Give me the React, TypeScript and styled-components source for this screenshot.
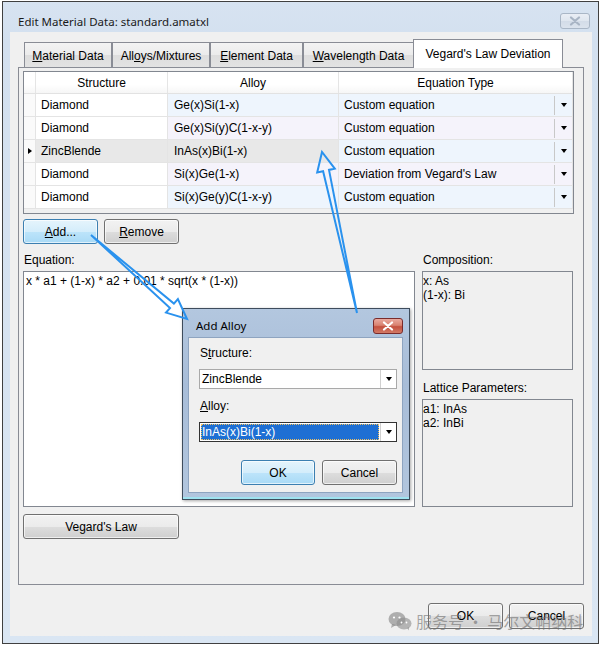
import React from 'react';
import styled, { createGlobalStyle } from 'styled-components';

const UI_FONT = `'Liberation Sans', Arial, sans-serif`;
const TITLE_FONT = `'Noto Sans', 'Liberation Sans', sans-serif`;

const GlobalStyle = createGlobalStyle`
  html, body { margin: 0; padding: 0; background: #ffffff; }
  body { font-family: ${UI_FONT}; font-size: 12px; color: #000; }
  * { box-sizing: border-box; }
  u { text-decoration: underline; text-underline-offset: 1px; }
`;

const Stage = styled.div`
  position: relative;
  width: 601px;
  height: 646px;
  overflow: hidden;
  background: #fff;
`;

const Window = styled.div`
  margin: 1px 0 0 2px;
  width: 597px;
  height: 643px;
  border: 1px solid #404040;
  background: linear-gradient(to bottom, #d7e3f1 0%, #d3e0ef 40px, #dae6f3 100%);
  display: flex;
  flex-direction: column;
`;

const TitleBar = styled.div`
  height: 30px;
  display: flex;
  align-items: flex-start;
  justify-content: space-between;
  padding: 0 8px 0 15px;
`;

const TitleText = styled.div`
  font-family: ${TITLE_FONT};
  font-size: 11.5px;
  color: #1a1a1a;
  margin-top: 13px;
  line-height: 14px;
`;

const CloseBtn = styled.div<{ $red?: boolean }>`
  width: 30px;
  height: 16px;
  margin-top: ${p => (p.$red ? 9 : 11)}px;
  border: 1px solid ${p => (p.$red ? '#7a2b2b' : '#a9b6c6')};
  border-radius: 3px;
  background: ${p =>
    p.$red
      ? 'linear-gradient(to bottom, #e9a99f 0%, #d98270 45%, #c4503e 55%, #d27a66 100%)'
      : 'linear-gradient(to bottom, #e9eef5 0%, #dfe6ef 50%, #d3dce8 51%, #dbe3ed 100%)'};
  display: flex;
  align-items: center;
  justify-content: center;
`;

const Client = styled.div`
  margin: 0 6px 0 7px;
  height: 604px;
  background: #f0f0f0;
  display: flex;
  flex-direction: column;
  padding: 8px 8px 0 8px;
`;

const TabStrip = styled.div`
  height: 28px;
  display: flex;
  align-items: flex-end;
  padding-left: 6px;
  margin-bottom: -1px;
  position: relative;
  z-index: 1;
`;

const Tab = styled.div<{ $w: number; $active?: boolean }>`
  width: ${p => p.$w}px;
  height: ${p => (p.$active ? 29 : 26)}px;
  margin-left: ${p => (p.$active ? -1 : 0)}px;
  border: 1px solid #898c95;
  border-bottom: ${p => (p.$active ? 'none' : '1px solid #898c95')};
  background: ${p =>
    p.$active ? '#ffffff' : 'linear-gradient(to bottom, #f3f3f3 0%, #ebebeb 50%, #dddddd 51%, #e3e3e3 100%)'};
  display: flex;
  align-items: center;
  justify-content: center;
  padding-bottom: ${p => (p.$active ? 1 : 0)}px;
  padding-top: ${p => (p.$active ? 0 : 1)}px;
  font-size: 12px;
  white-space: nowrap;
`;

const Panel = styled.div`
  height: 518px;
  border: 1px solid #898c95;
  background: #f0f0f0;
  padding: 3px 9px 0 4px;
  display: flex;
  flex-direction: column;
`;

const GridTable = styled.div`
  height: 143px;
  border: 1px solid #828790;
  background: #f0f0f0;
  display: flex;
  flex-direction: column;
`;

const COLS = '12px 132px 171px 1fr';

const HeaderRow = styled.div`
  height: 22px;
  display: grid;
  grid-template-columns: ${COLS};
  background: linear-gradient(to bottom, #ffffff 0%, #ffffff 60%, #f6f6f6 100%);
  border-bottom: 1px solid #e2e2e2;
`;

const HeaderCell = styled.div`
  display: flex;
  align-items: center;
  justify-content: center;
  border-right: 1px solid #e5e5e5;
  font-size: 12px;
`;

const Row = styled.div`
  height: 23px;
  display: grid;
  grid-template-columns: ${COLS};
  border-bottom: 1px solid #e4e4e4;
`;

const Cell = styled.div<{ $bg: string; $pad?: number }>`
  background: ${p => p.$bg};
  border-right: 1px solid #e4e4e4;
  display: flex;
  align-items: center;
  padding-left: ${p => p.$pad ?? 5}px;
  font-size: 12px;
  white-space: nowrap;
  overflow: hidden;
`;

const RowHead = styled.div`
  background: #fafafa;
  border-right: 1px solid #e4e4e4;
  display: flex;
  align-items: center;
  justify-content: center;
`;

const RowMarker = styled.div`
  width: 0;
  height: 0;
  border-top: 3.5px solid transparent;
  border-bottom: 3.5px solid transparent;
  border-left: 4px solid #000;
  margin-left: 1px;
`;

const DropCell = styled(Cell)`
  padding-right: 0;
  justify-content: space-between;
`;

const DropPart = styled.div`
  width: 18px;
  height: 19px;
  border-left: 1px solid #c8c8c8;
  display: flex;
  align-items: center;
  justify-content: center;
`;

const DownTri = styled.div<{ $color?: string }>`
  width: 0;
  height: 0;
  border-left: 3.5px solid transparent;
  border-right: 3.5px solid transparent;
  border-top: 4px solid ${p => p.$color || '#000'};
`;

const ButtonRow = styled.div`
  display: flex;
  gap: 6px;
  margin-top: 5px;
`;

const Btn = styled.div<{ $w: number; $blue?: boolean; $h?: number }>`
  width: ${p => p.$w}px;
  height: ${p => p.$h || 25}px;
  border: 1px solid ${p => (p.$blue ? '#3c7fb1' : '#707070')};
  border-radius: 3px;
  background: ${p =>
    p.$blue
      ? 'linear-gradient(to bottom, #e5f4fc 0%, #d4edfb 50%, #bde4fa 51%, #a9daf6 100%)'
      : 'linear-gradient(to bottom, #f2f2f2 0%, #ebebeb 50%, #dddddd 51%, #cfcfcf 100%)'};
  box-shadow: inset 0 0 0 1px rgba(255, 255, 255, 0.65);
  display: flex;
  align-items: center;
  justify-content: center;
  font-size: 12px;
  color: #000;
`;

const Lower = styled.div`
  display: grid;
  grid-template-columns: 392px 151px;
  column-gap: 7px;
  margin-top: 9px;
`;

const Column = styled.div`
  display: flex;
  flex-direction: column;
`;

const Label = styled.div<{ $gap?: number }>`
  line-height: 14px;
  font-size: 12px;
  margin-top: ${p => p.$gap || 0}px;
  margin-bottom: 4px;
  padding-left: 1px;
`;

const TextBox = styled.div<{ $h: number; $ro?: boolean }>`
  height: ${p => p.$h}px;
  border: 1px solid #828790;
  background: ${p => (p.$ro ? '#f0f0f0' : '#ffffff')};
  padding: ${p => (p.$ro ? '2px 0 0 0' : '2px 0 0 2px')};
  font-size: 12px;
  line-height: 14px;
  white-space: pre;
`;

const WideBtnRow = styled.div`
  margin-top: 7px;
`;

const FooterRow = styled.div`
  display: flex;
  justify-content: flex-end;
  gap: 6px;
  margin-top: 18px;
`;

/* ---------- Add Alloy dialog ---------- */
const Dialog = styled.div`
  position: absolute;
  left: 182px;
  top: 308px;
  width: 228px;
  height: 192px;
  border: 1px solid #3e4c5c;
  background: linear-gradient(to bottom, #b3c7df 0%, #a8bdd8 40%, #b2c6de 100%);
  box-shadow: 1px 1px 3px rgba(0, 0, 0, 0.35), inset 0 -2px 0 #9fe3f0;
  display: flex;
  flex-direction: column;
  z-index: 5;
`;

const DialogTitle = styled.div`
  height: 28px;
  display: flex;
  justify-content: space-between;
  align-items: flex-start;
  padding: 0 6px 0 13px;
`;

const DialogTitleText = styled.div`
  font-family: ${TITLE_FONT};
  font-size: 11.5px;
  line-height: 14px;
  margin-top: 10px;
  color: #000;
`;

const DialogClient = styled.div`
  margin: 0 6px 0 5px;
  height: 156px;
  background: #f0f0f0;
  border: 1px solid #8ea4c0;
  padding: 8px 0 0 10px;
  display: flex;
  flex-direction: column;
`;

const DLabel = styled.div<{ $gap: number }>`
  line-height: 14px;
  font-size: 12px;
  margin-top: ${p => p.$gap}px;
  padding-left: 1px;
`;

const Combo = styled.div<{ $focus?: boolean }>`
  margin-top: 9px;
  width: 198px;
  height: 20px;
  border: 1px solid ${p => (p.$focus ? '#333' : '#a9a9a9')};
  background: #fff;
  display: flex;
  align-items: stretch;
`;

const ComboText = styled.div<{ $sel?: boolean }>`
  flex: 1;
  margin: 1px;
  padding-left: 1px;
  display: flex;
  align-items: center;
  font-size: 12px;
  background: ${p => (p.$sel ? '#1e6fd3' : 'transparent')};
  color: ${p => (p.$sel ? '#fff' : '#000')};
  outline: ${p => (p.$sel ? '1px dotted #f0c060' : 'none')};
  outline-offset: -1px;
`;

const ComboArrow = styled.div`
  width: 16px;
  border-left: 1px solid #d0d0d0;
  display: flex;
  align-items: center;
  justify-content: center;
`;

const DialogButtons = styled.div`
  display: flex;
  justify-content: flex-end;
  gap: 7px;
  padding-right: 5px;
  margin-top: 18px;
`;

/* ---------- overlays ---------- */
const Overlay = styled.svg`
  position: absolute;
  left: 0;
  top: 0;
  z-index: 10;
  pointer-events: none;
`;

const Watermark = styled.div`
  position: absolute;
  left: 388px;
  top: 610px;
  display: flex;
  align-items: center;
  gap: 4px;
  z-index: 8;
  color: rgba(110, 110, 110, 0.6);
  font-family: 'Noto Sans CJK SC', 'Noto Sans', sans-serif;
  font-size: 16px;
  line-height: 22px;
  white-space: nowrap;
`;

function arrowPoints(
  tx: number, ty: number, px: number, py: number,
  L: number, h: number, s: number
): string {
  const dx = px - tx;
  const dy = py - ty;
  const len = Math.hypot(dx, dy);
  const ux = dx / len;
  const uy = dy / len;
  const nx = -uy;
  const ny = ux;
  const bx = px - L * ux;
  const by = py - L * uy;
  const pts = [
    [tx, ty],
    [bx + s * nx, by + s * ny],
    [bx + h * nx, by + h * ny],
    [px, py],
    [bx - h * nx, by - h * ny],
    [bx - s * nx, by - s * ny],
  ];
  return pts.map(p => `${p[0].toFixed(1)},${p[1].toFixed(1)}`).join(' ');
}

const XIcon: React.FC<{ color: string }> = ({ color }) => (
  <svg width="12" height="10" viewBox="0 0 12 10">
    <path d="M2 1.5 L10 8.5 M10 1.5 L2 8.5" stroke={color} strokeWidth="2.2" strokeLinecap="round" />
  </svg>
);

const rows = [
  { s: 'Diamond', a: 'Ge(x)Si(1-x)', e: 'Custom equation', bg: '#eef5fd', sel: false },
  { s: 'Diamond', a: 'Ge(x)Si(y)C(1-x-y)', e: 'Custom equation', bg: '#f5f3fb', sel: false },
  { s: 'ZincBlende', a: 'InAs(x)Bi(1-x)', e: 'Custom equation', bg: '#eef5fd', sel: true },
  { s: 'Diamond', a: 'Si(x)Ge(1-x)', e: "Deviation from Vegard's Law", bg: '#f5f3fb', sel: false },
  { s: 'Diamond', a: 'Si(x)Ge(y)C(1-x-y)', e: 'Custom equation', bg: '#eef5fd', sel: false },
];

export default function App() {
  return (
    <Stage>
      <GlobalStyle />
      <Window>
        <TitleBar>
          <TitleText>Edit Material Data: standard.amatxl</TitleText>
          <CloseBtn>
            <XIcon color="#a8b4c4" />
          </CloseBtn>
        </TitleBar>
        <Client>
          <TabStrip>
            <Tab $w={88}><span><u>M</u>aterial Data</span></Tab>
            <Tab $w={98}><span>All<u>o</u>ys/Mixtures</span></Tab>
            <Tab $w={93}><span><u>E</u>lement Data</span></Tab>
            <Tab $w={111}><span><u>W</u>avelength Data</span></Tab>
            <Tab $w={150} $active>Vegard's Law Deviation</Tab>
          </TabStrip>
          <Panel>
            <GridTable>
              <HeaderRow>
                <HeaderCell />
                <HeaderCell>Structure</HeaderCell>
                <HeaderCell>Alloy</HeaderCell>
                <HeaderCell>Equation Type</HeaderCell>
              </HeaderRow>
              {rows.map((r, i) => (
                <Row key={i}>
                  <RowHead>{r.sel && <RowMarker />}</RowHead>
                  <Cell $bg={r.sel ? '#e8e8e8' : '#ffffff'}>{r.s}</Cell>
                  <Cell $bg={r.sel ? '#e8e8e8' : r.bg} $pad={6}>{r.a}</Cell>
                  <DropCell $bg={r.bg}>
                    <span>{r.e}</span>
                    <DropPart>
                      <DownTri />
                    </DropPart>
                  </DropCell>
                </Row>
              ))}
            </GridTable>
            <ButtonRow>
              <Btn $w={75} $blue><span><u>A</u>dd...</span></Btn>
              <Btn $w={75}><span><u>R</u>emove</span></Btn>
            </ButtonRow>
            <Lower>
              <Column>
                <Label>Equation:</Label>
                <TextBox $h={236}>x * a1 + (1-x) * a2 + 0.01 * sqrt(x * (1-x))</TextBox>
              </Column>
              <Column>
                <Label>Composition:</Label>
                <TextBox $h={99} $ro>{'x: As\n(1-x): Bi'}</TextBox>
                <Label $gap={11}>Lattice Parameters:</Label>
                <TextBox $h={108} $ro>{'a1: InAs\na2: InBi'}</TextBox>
              </Column>
            </Lower>
            <WideBtnRow>
              <Btn $w={156}>Vegard's Law</Btn>
            </WideBtnRow>
          </Panel>
          <FooterRow>
            <Btn $w={75} $h={26}>OK</Btn>
            <Btn $w={75} $h={26}>Cancel</Btn>
          </FooterRow>
        </Client>
      </Window>

      <Dialog>
        <DialogTitle>
          <DialogTitleText>Add Alloy</DialogTitleText>
          <CloseBtn $red>
            <XIcon color="#ffffff" />
          </CloseBtn>
        </DialogTitle>
        <DialogClient>
          <DLabel $gap={0}>S<u>t</u>ructure:</DLabel>
          <Combo>
            <ComboText>ZincBlende</ComboText>
            <ComboArrow><DownTri /></ComboArrow>
          </Combo>
          <DLabel $gap={10}><u>A</u>lloy:</DLabel>
          <Combo $focus>
            <ComboText $sel>InAs(x)Bi(1-x)</ComboText>
            <ComboArrow><DownTri /></ComboArrow>
          </Combo>
          <DialogButtons>
            <Btn $w={74} $blue>OK</Btn>
            <Btn $w={75}>Cancel</Btn>
          </DialogButtons>
        </DialogClient>
      </Dialog>

      <Watermark>
        <svg width="24" height="20" viewBox="0 0 24 20">
          <ellipse cx="9" cy="8" rx="8.5" ry="7" fill="rgba(120,120,120,0.55)" />
          <path d="M4 13 L3 17 L8 14 Z" fill="rgba(120,120,120,0.55)" />
          <ellipse cx="16" cy="12.5" rx="7.5" ry="6" fill="rgba(140,140,140,0.6)" />
          <path d="M19 17 L21 19.5 L21 16 Z" fill="rgba(140,140,140,0.6)" />
          <circle cx="6" cy="6.5" r="1.1" fill="#fff" />
          <circle cx="11.5" cy="6.5" r="1.1" fill="#fff" />
          <circle cx="13.5" cy="11.5" r="0.9" fill="#fff" />
          <circle cx="18.5" cy="11.5" r="0.9" fill="#fff" />
        </svg>
        <span>服务号 · 马尔文帕纳科</span>
      </Watermark>

      <Overlay width="601" height="646" viewBox="0 0 601 646">
        <polygon
          points={arrowPoints(91, 235, 187, 319, 20, 9, 3)}
          fill="none"
          stroke="#2a92ee"
          strokeWidth="2"
          strokeLinejoin="miter"
        />
        <polygon
          points={arrowPoints(357, 313, 322, 152, 19, 9, 3)}
          fill="none"
          stroke="#2a92ee"
          strokeWidth="2"
          strokeLinejoin="miter"
        />
      </Overlay>
    </Stage>
  );
}
